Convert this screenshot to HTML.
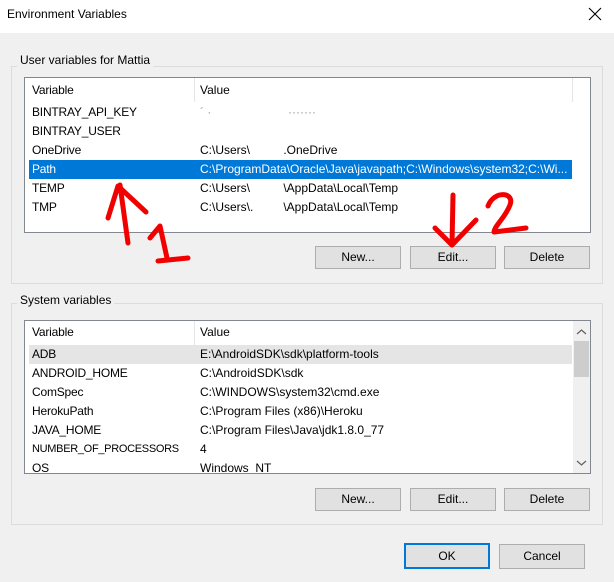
<!DOCTYPE html>
<html><head><style>
*{box-sizing:border-box;margin:0;padding:0}
body{width:614px;height:582px;background:#f0f0f0;font-family:"Liberation Sans",sans-serif;font-size:12px;color:#000;position:relative;overflow:hidden}
.a{position:absolute}
.title{left:0;top:0;width:614px;height:33px;background:#fff}
.grp{border:1px solid #dcdcdc}
.lbl{background:#f0f0f0;padding:0 3px}
.list{background:#fff;border:1px solid #828790;overflow:hidden}
.row{position:absolute;left:4px;height:19px;line-height:19px;width:543px}
.row span{position:absolute;left:3px;letter-spacing:-0.2px}
.row b{font-weight:normal;position:absolute;left:171px;white-space:nowrap}
.btn{background:#e1e1e1;border:1px solid #adadad;text-align:center;line-height:21px;height:23px;width:86px}
</style></head><body>
<div class="a title"></div>
<div class="a" style="left:7px;top:7px;font-size:12px">Environment Variables</div>
<svg class="a" style="left:588px;top:7px" width="14" height="14" stroke="#000" stroke-width="1.1"><path d="M1 1 L13 13 M13 1 L1 13"/></svg>

<div class="a grp" style="left:11px;top:66px;width:592px;height:218px"></div>
<div class="a lbl" style="left:17px;top:53px">User variables for Mattia</div>
<div class="a list" style="left:24px;top:77px;width:567px;height:156px">
 <div class="a" style="left:169px;top:0;width:1px;height:24px;background:#e5e5e5"></div>
 <div class="a" style="left:547px;top:0;width:1px;height:24px;background:#e5e5e5"></div>
 <div class="row" style="top:3px"><span>Variable</span><b>Value</b></div>
 <div class="row" style="top:25px"><span>BINTRAY_API_KEY</span><b style="color:#999">´ ·&nbsp;&nbsp;&nbsp;&nbsp;&nbsp;&nbsp;&nbsp;&nbsp;&nbsp;&nbsp;&nbsp;&nbsp;&nbsp;&nbsp;&nbsp;&nbsp;&nbsp;&nbsp;&nbsp;&nbsp;&nbsp;&nbsp; ·······</b></div>
 <div class="row" style="top:44px"><span>BINTRAY_USER</span><b></b></div>
 <div class="row" style="top:63px"><span>OneDrive</span><b>C:\Users\&nbsp;&nbsp;&nbsp;&nbsp;&nbsp;&nbsp;&nbsp;&nbsp;&nbsp;&nbsp;.OneDrive</b></div>
 <div class="row" style="top:82px;background:#0078d7;color:#fff"><span>Path</span><b>C:\ProgramData\Oracle\Java\javapath;C:\Windows\system32;C:\Wi...</b></div>
 <div class="row" style="top:101px"><span>TEMP</span><b>C:\Users\&nbsp;&nbsp;&nbsp;&nbsp;&nbsp;&nbsp;&nbsp;&nbsp;&nbsp;&nbsp;\AppData\Local\Temp</b></div>
 <div class="row" style="top:120px"><span>TMP</span><b>C:\Users\.&nbsp;&nbsp;&nbsp;&nbsp;&nbsp;&nbsp;&nbsp;&nbsp;&nbsp;\AppData\Local\Temp</b></div>
</div>
<div class="a btn" style="left:315px;top:246px">New...</div>
<div class="a btn" style="left:410px;top:246px">Edit...</div>
<div class="a btn" style="left:504px;top:246px">Delete</div>

<div class="a grp" style="left:11px;top:303px;width:592px;height:222px"></div>
<div class="a lbl" style="left:17px;top:293px">System variables</div>
<div class="a list" style="left:24px;top:320px;width:567px;height:154px">
 <div class="a" style="left:169px;top:0;width:1px;height:24px;background:#e5e5e5"></div>
 <div class="row" style="top:2px"><span>Variable</span><b>Value</b></div>
 <div class="row" style="top:24px;background:#e5e5e5"><span>ADB</span><b>E:\AndroidSDK\sdk\platform-tools</b></div>
 <div class="row" style="top:43px"><span>ANDROID_HOME</span><b>C:\AndroidSDK\sdk</b></div>
 <div class="row" style="top:62px"><span>ComSpec</span><b>C:\WINDOWS\system32\cmd.exe</b></div>
 <div class="row" style="top:81px"><span>HerokuPath</span><b>C:\Program Files (x86)\Heroku</b></div>
 <div class="row" style="top:100px"><span>JAVA_HOME</span><b>C:\Program Files\Java\jdk1.8.0_77</b></div>
 <div class="row" style="top:119px"><span style="font-size:11px;letter-spacing:-0.3px">NUMBER_OF_PROCESSORS</span><b>4</b></div>
 <div class="row" style="top:138px"><span>OS</span><b>Windows_NT</b></div>
 <div class="a" style="left:548px;top:0;width:17px;height:152px;background:#f0f0f0"></div>
 <div class="a" style="left:549px;top:20px;width:15px;height:36px;background:#cdcdcd"></div>
 <svg class="a" style="left:551px;top:8px" width="11" height="6" fill="none" stroke="#606060" stroke-width="1.2"><path d="M1 5 L5.5 1 L10 5"/></svg>
 <svg class="a" style="left:551px;top:139px" width="11" height="6" fill="none" stroke="#606060" stroke-width="1.2"><path d="M1 1 L5.5 5 L10 1"/></svg>
</div>
<div class="a btn" style="left:315px;top:488px">New...</div>
<div class="a btn" style="left:410px;top:488px">Edit...</div>
<div class="a btn" style="left:504px;top:488px">Delete</div>

<div class="a btn" style="left:404px;top:543px;height:26px;line-height:22px;border:2px solid #0078d7">OK</div>
<div class="a btn" style="left:499px;top:544px;height:25px;line-height:23px">Cancel</div>

<svg class="a" style="left:0;top:0" width="614" height="582" fill="none" stroke="#f20000" stroke-width="5" stroke-linecap="round" stroke-linejoin="round">
<path d="M120 185 L128 243"/>
<path d="M108 218 L118 186 L146 212"/>
<path d="M150 238 L160 226 L167 258"/>
<path d="M158 261 L188 258"/>
<path d="M453 195 L452 245"/>
<path d="M435 228 L452 245 L476 220"/>
<path d="M488 206 C494 190 515 192 510 205 C505 218 495 225 494 232 L526 228"/>
</svg>
</body></html>
